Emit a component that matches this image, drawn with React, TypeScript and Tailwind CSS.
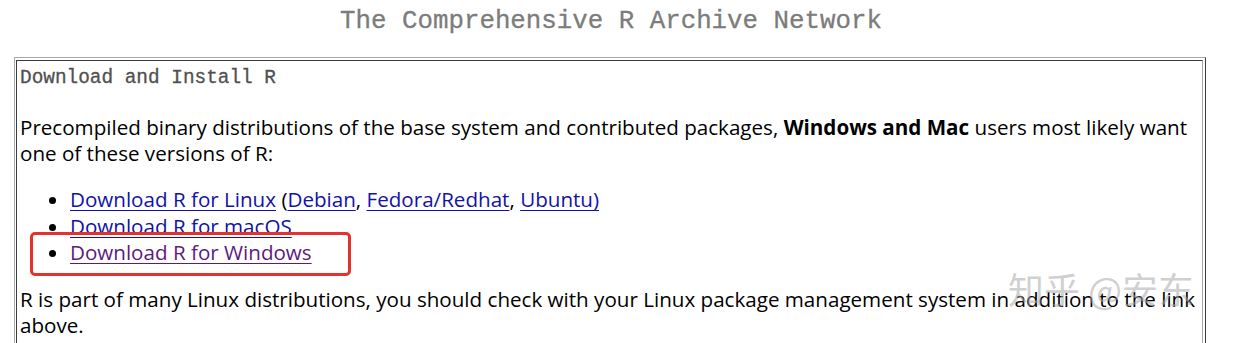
export default function App() {
  const mono = { fontFamily: '"Liberation Mono", "DejaVu Sans Mono", monospace' }
  const linkBlue = "text-[#1212a8] underline underline-offset-[3px] decoration-1"
  const linkVisited = "text-[#5e1a7c] underline underline-offset-[3px] decoration-1"

  return (
    <div
      className="relative w-[1235px] h-[343px] overflow-hidden bg-white text-black"
      style={{ fontFamily: '"Open Sans", "Noto Sans", sans-serif' }}
    >
      <div className="w-[1222px] h-[44px] flex items-center justify-center">
        <h1 className="text-[25.8px] leading-none text-[#7c7c7c] font-normal [-webkit-text-stroke:0.3px]" style={mono}>
          The Comprehensive R Archive Network
        </h1>
      </div>

      <div className="ml-[14px] mt-[13px] w-[1192px] border border-t-[#a8a8a8] border-l-[#a8a8a8] border-r-[#3c3c3c] border-b-[#3c3c3c] pt-[2px] pl-[1px] pr-[2px]">
        <div className="border border-t-[#3c3c3c] border-l-[#3c3c3c] border-r-[#a8a8a8] border-b-[#a8a8a8] pl-[3px] pt-[4px] h-[400px]">
          <h2 className="text-[19.4px] leading-[26px] text-[#505050] font-normal [-webkit-text-stroke:0.3px]" style={mono}>
            Download and Install R
          </h2>

          <p className="mt-[23px] text-[20.6px] leading-[26px]">
            Precompiled binary distributions of the base system and contributed packages,{" "}
            <b className="font-bold">Windows and Mac</b> users most likely want one of these versions of R:
          </p>

          <ul className="mt-[20px] pl-[50px] list-disc text-[20.6px] leading-[26.5px]">
            <li>
              <a className={linkBlue}>Download R for Linux</a> (<a className={linkBlue}>Debian</a>,{" "}
              <a className={linkBlue}>Fedora/Redhat</a>, <a className={linkBlue}>Ubuntu)</a>
            </li>
            <li>
              <a className={linkBlue}>Download R for macOS</a>
            </li>
            <li>
              <a className={linkVisited}>Download R for Windows</a>
            </li>
          </ul>

          <p className="mt-[20.5px] text-[20.6px] leading-[26px]">
            R is part of many Linux distributions, you should check with your Linux package management system in
            addition to the link above.
          </p>
        </div>
      </div>

      <div className="absolute left-[30px] top-[232px] w-[321px] h-[44px] rounded-[5px] border-[3px] border-[#e5312c]" />

      <div
        className="absolute left-[1008px] top-[270px] text-[36px] leading-none text-[#a8a8a8]/55 whitespace-nowrap"
        style={{ fontFamily: '"Noto Sans CJK SC", sans-serif' }}
      >
        知乎 @安东
      </div>
    </div>
  )
}
